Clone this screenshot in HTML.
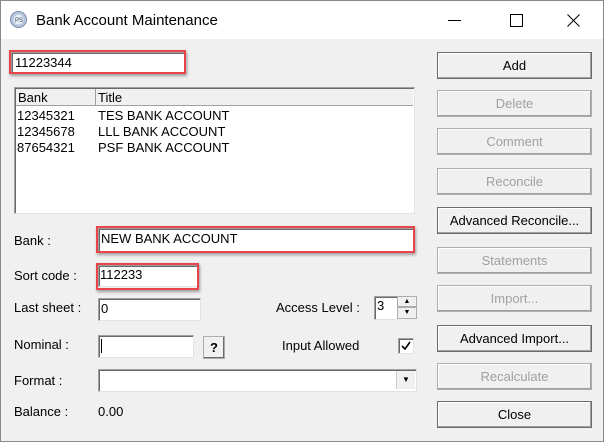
<!DOCTYPE html>
<html><head><style>
body{margin:0;width:604px;height:442px;overflow:hidden;font-family:"Liberation Sans",sans-serif;font-size:13px;color:#000}
.win{position:absolute;left:0;top:0;width:602px;height:440px;border:1px solid #8a8a8a;background:#f0f0f0}
.title{position:absolute;left:0;top:0;width:602px;height:38px;background:#fff}
.a{position:absolute}
.btn{position:absolute;left:436px;width:153px;height:25px;border:1px solid #adadad;background:#f0f0f0;box-shadow:inset -1px -1px #a0a0a0,inset 1px 1px #fff;text-align:center;line-height:25px;color:#a0a0a0}
.btn.en{color:#000;border-color:#6b6b6b}
.inp{position:absolute;background:#fff;border:1px solid #a0a0a0;border-right-color:#e3e3e3;border-bottom-color:#e3e3e3;box-shadow:inset 1px 1px #696969}
.red{position:absolute;border:2px solid #e8444a;box-shadow:1px 2px 3px rgba(0,0,0,.35)}
.lbl{position:absolute}
</style></head><body>
<div class="win">
<div class="title">
<svg class="a" style="left:9px;top:10px" width="17" height="17"><circle cx="8.5" cy="8.5" r="8" fill="#b8c6dc" stroke="#7d8fb0"/><circle cx="8.5" cy="8.5" r="5" fill="#e8eef7"/><text x="5" y="11" font-size="6" fill="#345">PS</text></svg>
<div class="a" style="left:35px;top:11px;font-size:15px">Bank Account Maintenance</div>
<div class="a" style="left:447px;top:19px;width:13px;height:1px;background:#000"></div>
<div class="a" style="left:509px;top:13px;width:11px;height:11px;border:1px solid #000"></div>
<svg class="a" style="left:566px;top:13px" width="13" height="13"><path d="M0.5 0.5L12.5 12.5M12.5 0.5L0.5 12.5" stroke="#000"/></svg>
</div>
<div class="inp" style="left:10px;top:51px;width:173px;height:20px"></div>
<div class="red" style="left:8px;top:49px;width:173px;height:20px"></div>
<div class="a" style="left:14px;top:54px">11223344</div>
<div class="inp" style="left:13px;top:86px;width:399px;height:125px"></div>
<div class="a" style="left:15px;top:88px;width:397px;height:16px;background:#f0f0f0;border-bottom:1px solid #a0a0a0"></div>
<div class="a" style="left:94px;top:88px;width:1px;height:16px;background:#a0a0a0"></div>
<div class="a" style="left:17px;top:89px">Bank</div><div class="a" style="left:97px;top:89px">Title</div>
<div class="a" style="left:16px;top:107px;line-height:16px">12345321<br>12345678<br>87654321</div>
<div class="a" style="left:97px;top:107px;line-height:16px">TES BANK ACCOUNT<br>LLL BANK ACCOUNT<br>PSF BANK ACCOUNT</div>

<div class="lbl" style="left:13px;top:232px">Bank :</div>
<div class="inp" style="left:97px;top:227px;width:314px;height:22px"></div>
<div class="red" style="left:95px;top:225px;width:315px;height:23px"></div>
<div class="a" style="left:100px;top:230px">NEW BANK ACCOUNT</div>

<div class="lbl" style="left:13px;top:267px">Sort code :</div>
<div class="inp" style="left:97px;top:264px;width:100px;height:20px"></div>
<div class="red" style="left:95px;top:262px;width:99px;height:23px"></div>
<div class="a" style="left:99px;top:266px">112233</div>

<div class="lbl" style="left:13px;top:299px">Last sheet :</div>
<div class="inp" style="left:97px;top:297px;width:101px;height:21px"></div>
<div class="a" style="left:100px;top:300px">0</div>
<div class="lbl" style="left:275px;top:299px">Access Level :</div>
<div class="inp" style="left:373px;top:295px;width:22px;height:22px"></div>
<div class="a" style="left:376px;top:297px">3</div>
<div class="a" style="left:396px;top:295px;width:20px;height:11px;border:1px solid #adadad;box-sizing:border-box;font-size:7px;text-align:center;line-height:9px">▲</div>
<div class="a" style="left:396px;top:306px;width:20px;height:12px;border:1px solid #adadad;box-sizing:border-box;font-size:7px;text-align:center;line-height:10px">▼</div>

<div class="lbl" style="left:13px;top:336px">Nominal :</div>
<div class="inp" style="left:97px;top:334px;width:94px;height:21px"></div>
<div class="a" style="left:100px;top:338px;width:1px;height:14px;background:#000"></div>
<div class="a" style="left:202px;top:335px;width:20px;height:21px;border:1px solid #adadad;box-shadow:inset -1px -1px #6b6b6b;font-weight:bold;text-align:center;line-height:21px">?</div>
<div class="lbl" style="left:281px;top:337px">Input Allowed</div>
<div class="inp" style="left:397px;top:337px;width:14px;height:14px"></div>
<svg class="a" style="left:400px;top:340px" width="10" height="10"><path d="M1 5L4 8L9 1" stroke="#000" stroke-width="1.6" fill="none"/></svg>

<div class="lbl" style="left:13px;top:372px">Format :</div>
<div class="inp" style="left:97px;top:368px;width:317px;height:21px"></div>
<div class="a" style="left:395px;top:370px;width:18px;height:18px;background:#f0f0f0;border-left:1px solid #ccc;font-size:8px;text-align:center;line-height:18px">▼</div>

<div class="lbl" style="left:13px;top:403px">Balance :</div>
<div class="a" style="left:97px;top:403px">0.00</div>

<div class="btn en" style="top:51px">Add</div>
<div class="btn" style="top:89px">Delete</div>
<div class="btn" style="top:127px">Comment</div>
<div class="btn" style="top:167px">Reconcile</div>
<div class="btn en" style="top:206px">Advanced Reconcile...</div>
<div class="btn" style="top:246px">Statements</div>
<div class="btn" style="top:284px">Import...</div>
<div class="btn en" style="top:324px">Advanced Import...</div>
<div class="btn" style="top:362px">Recalculate</div>
<div class="btn en" style="top:400px">Close</div>
</div>
</body></html>
